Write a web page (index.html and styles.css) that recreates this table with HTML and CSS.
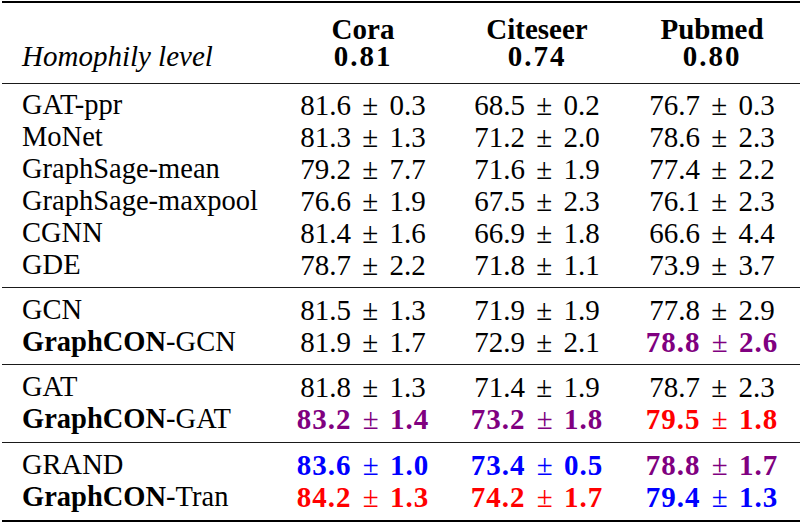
FILE: index.html
```html
<!DOCTYPE html>
<html>
<head>
<meta charset="utf-8">
<link rel="stylesheet" href="styles.css">
</head>
<body>
<div class="tbl">
  <div class="head">
    <div class="hcell label"><em>Homophily level</em></div>
    <div class="hcell"><b>Cora</b><b class="bnum">0.81</b></div>
    <div class="hcell"><b>Citeseer</b><b class="bnum">0.74</b></div>
    <div class="hcell"><b>Pubmed</b><b class="bnum">0.80</b></div>
  </div>
  <div class="group first">
    <div class="row"><span class="name">GAT-ppr</span><span class="v">81.6 ± 0.3</span><span class="v">68.5 ± 0.2</span><span class="v">76.7 ± 0.3</span></div>
    <div class="row"><span class="name">MoNet</span><span class="v">81.3 ± 1.3</span><span class="v">71.2 ± 2.0</span><span class="v">78.6 ± 2.3</span></div>
    <div class="row"><span class="name">GraphSage-mean</span><span class="v">79.2 ± 7.7</span><span class="v">71.6 ± 1.9</span><span class="v">77.4 ± 2.2</span></div>
    <div class="row"><span class="name">GraphSage-maxpool</span><span class="v">76.6 ± 1.9</span><span class="v">67.5 ± 2.3</span><span class="v">76.1 ± 2.3</span></div>
    <div class="row"><span class="name">CGNN</span><span class="v">81.4 ± 1.6</span><span class="v">66.9 ± 1.8</span><span class="v">66.6 ± 4.4</span></div>
    <div class="row"><span class="name">GDE</span><span class="v">78.7 ± 2.2</span><span class="v">71.8 ± 1.1</span><span class="v">73.9 ± 3.7</span></div>
  </div>
  <div class="group g2">
    <div class="row"><span class="name">GCN</span><span class="v">81.5 ± 1.3</span><span class="v">71.9 ± 1.9</span><span class="v">77.8 ± 2.9</span></div>
    <div class="row"><span class="name"><b>GraphCON</b>-GCN</span><span class="v">81.9 ± 1.7</span><span class="v">72.9 ± 2.1</span><span class="v purple"><b>78.8</b> ± <b>2.6</b></span></div>
  </div>
  <div class="group">
    <div class="row"><span class="name">GAT</span><span class="v">81.8 ± 1.3</span><span class="v">71.4 ± 1.9</span><span class="v">78.7 ± 2.3</span></div>
    <div class="row"><span class="name"><b>GraphCON</b>-GAT</span><span class="v purple"><b>83.2</b> ± <b>1.4</b></span><span class="v purple"><b>73.2</b> ± <b>1.8</b></span><span class="v red"><b>79.5</b> ± <b>1.8</b></span></div>
  </div>
  <div class="group">
    <div class="row"><span class="name">GRAND</span><span class="v blue"><b>83.6</b> ± <b>1.0</b></span><span class="v blue"><b>73.4</b> ± <b>0.5</b></span><span class="v purple"><b>78.8</b> ± <b>1.7</b></span></div>
    <div class="row"><span class="name"><b>GraphCON</b>-Tran</span><span class="v red"><b>84.2</b> ± <b>1.3</b></span><span class="v red"><b>74.2</b> ± <b>1.7</b></span><span class="v blue"><b>79.4</b> ± <b>1.3</b></span></div>
  </div>
</div>
</body>
</html>
```
FILE: styles.css
```css
html, body {
  margin: 0;
  padding: 0;
  background: #fff;
}
body {
  font-family: "Liberation Serif", "Times New Roman", serif;
  font-size: 29px;
  color: #000;
}
.tbl {
  width: 798px;
  margin: 1px 0 0 2px;
  border-top: 2px solid #000;
  border-bottom: 2px solid #000;
}
.head {
  display: grid;
  grid-template-columns: 274px 174px 174px 176px;
  padding: 13px 0 13px;
  border-bottom: 1px solid #1a1a1a;
}
.hcell {
  display: flex;
  flex-direction: column;
  align-items: center;
  line-height: 27px;
  height: 54px;
}
.hcell.label {
  align-items: flex-start;
  justify-content: flex-end;
  padding-left: 20px;
}
.bnum {
  letter-spacing: 2px;
  font-size: 29px;
}
.group {
  padding: 6px 0 7px;
  border-bottom: 1px solid #1a1a1a;
}
.group:last-child {
  border-bottom: none;
}
.group.first {
  padding: 5px 0 6px;
}
.group.g2 {
  padding: 6px 0 6px;
}
.row {
  display: grid;
  grid-template-columns: 274px 174px 174px 176px;
  line-height: 32px;
  height: 32px;
}
.name {
  padding-left: 20px;
  white-space: nowrap;
  font-size: 28.5px;
}
.v {
  text-align: center;
  white-space: nowrap;
  word-spacing: 4px;
}
.v b {
  letter-spacing: 1px;
}
.purple { color: #800080; }
.red { color: #ff0000; }
.blue { color: #0000ff; }
```
